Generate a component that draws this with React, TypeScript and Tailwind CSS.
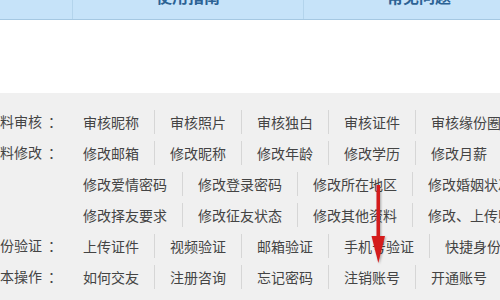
import React from "react";

// 帮助中心的分类快捷入口
const ROWS: { label: string; items: string[] }[] = [
  { label: "资料审核", items: ["审核昵称", "审核照片", "审核独白", "审核证件", "审核缘份圈"] },
  { label: "资料修改", items: ["修改邮箱", "修改昵称", "修改年龄", "修改学历", "修改月薪"] },
  { label: "", items: ["修改爱情密码", "修改登录密码", "修改所在地区", "修改婚姻状况"] },
  { label: "", items: ["修改择友要求", "修改征友状态", "修改其他资料", "修改、上传照片"] },
  { label: "身份验证", items: ["上传证件", "视频验证", "邮箱验证", "手机号验证", "快捷身份验证"] },
  { label: "基本操作", items: ["如何交友", "注册咨询", "忘记密码", "注销账号", "开通账号"] },
];

const TABS = ["帮助首页", "使用指南", "常见问题"];

export default function App() {
  return (
    <div
      className="relative w-[500px] h-[300px] overflow-hidden bg-white text-[#444]"
      style={{ fontFamily: '"Noto Sans CJK SC", "Noto Sans", sans-serif' }}
    >
      {/* 顶部导航 */}
      <div className="h-[20px] bg-[#c6e3f9] border-b border-[#a5c8e2] overflow-hidden flex -ml-[158px]">
        {TABS.map((t, i) => (
          <div key={t} className="flex">
            {i > 0 && <div className="w-px h-full bg-[#e4f2fc] border-r border-[#b3d4ec]" />}
            <div className="w-[230px] flex justify-center">
              <span className="-mt-[12px] leading-[16px] text-[16px] font-bold text-[#2c6294]">{t}</span>
            </div>
          </div>
        ))}
      </div>

      <div className="h-[73px]" />

      {/* 分类列表 */}
      <div className="bg-[#f0f0f0] h-[207px] pt-[13px]">
        {ROWS.map((row, r) => (
          <div key={r} className="h-[31px] flex items-center text-[14px] whitespace-nowrap">
            <div className="w-[82px] -ml-[14px] shrink-0 flex">
              {row.label && (
                <>
                  <span>{row.label}</span>
                  <span className="ml-[6px]">：</span>
                </>
              )}
            </div>
            {row.items.map((item, i) => (
              <div key={item} className="flex items-center">
                {i > 0 && <span className="w-px h-[24px] bg-[#d6d6d6]" />}
                <span className="px-[15px] leading-[20px]">{item}</span>
              </div>
            ))}
          </div>
        ))}
      </div>

      {/* 红色箭头 */}
      <svg className="absolute left-0 top-0 pointer-events-none" width="500" height="300">
        <defs>
          <filter id="sh" x="-50%" y="-10%" width="200%" height="120%">
            <feDropShadow dx="1" dy="1" stdDeviation="1" floodColor="#000" floodOpacity="0.3" />
          </filter>
        </defs>
        <g filter="url(#sh)" fill="#d41c1e" stroke="none">
          <rect x="376.5" y="185" width="3.5" height="54" />
          <polygon points="371.5,236 385,236 378.3,263" />
        </g>
      </svg>
    </div>
  );
}
